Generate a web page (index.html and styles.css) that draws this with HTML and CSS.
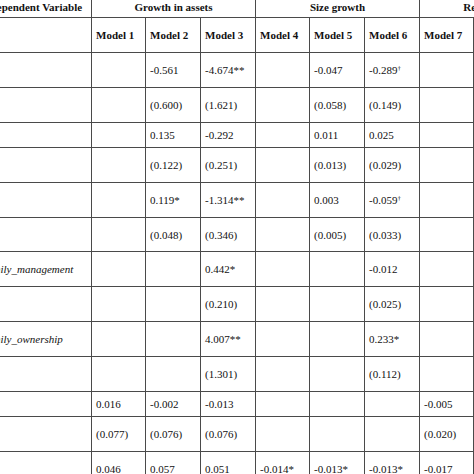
FILE: index.html
```html
<!DOCTYPE html>
<html>
<head>
<meta charset="utf-8">
<link rel="stylesheet" href="styles.css">
</head>
<body>
<div class="tbl">
  <div class="c hd">Dependent Variable</div>
  <div class="c hd span">Growth in assets</div>
  <div class="c hd span">Size growth</div>
  <div class="c hd span">Revenue growth</div>

  <div class="c"></div>
  <div class="c b">Model 1</div><div class="c b">Model 2</div><div class="c b">Model 3</div>
  <div class="c b">Model 4</div><div class="c b">Model 5</div><div class="c b">Model 6</div>
  <div class="c b">Model 7</div><div class="c b">Model 8</div><div class="c b">Model 9</div>

  <div class="c"></div>
  <div class="c"></div><div class="c">-0.561</div><div class="c">-4.674**</div>
  <div class="c"></div><div class="c">-0.047</div><div class="c">-0.289<sup>†</sup></div>
  <div class="c"></div><div class="c"></div><div class="c"></div>

  <div class="c"></div>
  <div class="c"></div><div class="c">(0.600)</div><div class="c">(1.621)</div>
  <div class="c"></div><div class="c">(0.058)</div><div class="c">(0.149)</div>
  <div class="c"></div><div class="c"></div><div class="c"></div>

  <div class="c"></div>
  <div class="c"></div><div class="c">0.135</div><div class="c">-0.292</div>
  <div class="c"></div><div class="c">0.011</div><div class="c">0.025</div>
  <div class="c"></div><div class="c"></div><div class="c"></div>

  <div class="c"></div>
  <div class="c"></div><div class="c">(0.122)</div><div class="c">(0.251)</div>
  <div class="c"></div><div class="c">(0.013)</div><div class="c">(0.029)</div>
  <div class="c"></div><div class="c"></div><div class="c"></div>

  <div class="c"></div>
  <div class="c"></div><div class="c">0.119*</div><div class="c">-1.314**</div>
  <div class="c"></div><div class="c">0.003</div><div class="c">-0.059<sup>†</sup></div>
  <div class="c"></div><div class="c"></div><div class="c"></div>

  <div class="c"></div>
  <div class="c"></div><div class="c">(0.048)</div><div class="c">(0.346)</div>
  <div class="c"></div><div class="c">(0.005)</div><div class="c">(0.033)</div>
  <div class="c"></div><div class="c"></div><div class="c"></div>

  <div class="c lab">family_management</div>
  <div class="c"></div><div class="c"></div><div class="c">0.442*</div>
  <div class="c"></div><div class="c"></div><div class="c">-0.012</div>
  <div class="c"></div><div class="c"></div><div class="c"></div>

  <div class="c"></div>
  <div class="c"></div><div class="c"></div><div class="c">(0.210)</div>
  <div class="c"></div><div class="c"></div><div class="c">(0.025)</div>
  <div class="c"></div><div class="c"></div><div class="c"></div>

  <div class="c lab">family_ownership</div>
  <div class="c"></div><div class="c"></div><div class="c">4.007**</div>
  <div class="c"></div><div class="c"></div><div class="c">0.233*</div>
  <div class="c"></div><div class="c"></div><div class="c"></div>

  <div class="c"></div>
  <div class="c"></div><div class="c"></div><div class="c">(1.301)</div>
  <div class="c"></div><div class="c"></div><div class="c">(0.112)</div>
  <div class="c"></div><div class="c"></div><div class="c"></div>

  <div class="c"></div>
  <div class="c">0.016</div><div class="c">-0.002</div><div class="c">-0.013</div>
  <div class="c"></div><div class="c"></div><div class="c"></div>
  <div class="c">-0.005</div><div class="c"></div><div class="c"></div>

  <div class="c"></div>
  <div class="c">(0.077)</div><div class="c">(0.076)</div><div class="c">(0.076)</div>
  <div class="c"></div><div class="c"></div><div class="c"></div>
  <div class="c">(0.020)</div><div class="c"></div><div class="c"></div>

  <div class="c"></div>
  <div class="c">0.046</div><div class="c">0.057</div><div class="c">0.051</div>
  <div class="c">-0.014*</div><div class="c">-0.013*</div><div class="c">-0.013*</div>
  <div class="c">-0.017</div><div class="c"></div><div class="c"></div>
</div>
</body>
</html>
```
FILE: styles.css
```css
html, body {
  margin: 0;
  padding: 0;
  background: #fff;
  overflow: hidden;
  width: 474px;
  height: 474px;
}

.tbl {
  display: grid;
  grid-template-columns: 111px 53px 54px 54px 53px 54px 54px 53px 54px 54px;
  grid-template-rows: 17px 34px 34px 34px 24px 34px 34px 33px 34px 34px 34px 34px 24px 34px 34px;
  gap: 1px;
  background: #4a4a4a;
  margin-left: -20px;
  width: max-content;
  font-family: "Liberation Serif", "Times New Roman", serif;
  font-size: 11px;
  color: #111;
}

.c {
  background: #fff;
  display: flex;
  align-items: center;
  padding-left: 4px;
  white-space: nowrap;
  overflow: hidden;
}

.hd {
  font-weight: bold;
  justify-content: center;
  padding-left: 0;
  align-items: flex-start;
  padding-top: 1px;
}

.span {
  grid-column: span 3;
}

.b {
  font-weight: bold;
}

.lab {
  font-style: italic;
}

sup {
  font-size: 7px;
  line-height: 0;
  position: relative;
  top: -2px;
}
```
